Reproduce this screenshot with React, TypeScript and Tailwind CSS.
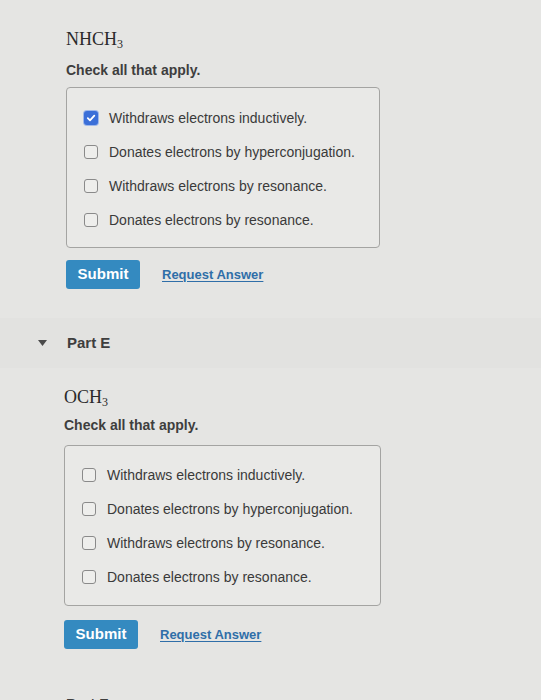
import React from "react";

const options = [
  "Withdraws electrons inductively.",
  "Donates electrons by hyperconjugation.",
  "Withdraws electrons by resonance.",
  "Donates electrons by resonance.",
];

function Box({ checked }: { checked: boolean }) {
  if (checked) {
    return (
      <span className="flex h-[14px] w-[14px] shrink-0 items-center justify-center rounded-[3px] bg-[#3b6fd8] ring-1 ring-[#9fb8ea]">
        <svg width="10" height="10" viewBox="0 0 10 10">
          <path d="M1.8 5.2 L4 7.4 L8.3 2.6" fill="none" stroke="#fff" strokeWidth="1.8" strokeLinecap="round" strokeLinejoin="round" />
        </svg>
      </span>
    );
  }
  return <span className="h-[14px] w-[14px] shrink-0 rounded-[3px] border border-[#8a8a8a] bg-[#eeeeec]" />;
}

function Question({
  formula,
  sub,
  checkedIndex,
  offset,
  second,
}: {
  formula: string;
  sub: string;
  checkedIndex: number;
  offset: number;
  second?: boolean;
}) {
  return (
    <div style={{ marginLeft: offset }}>
      <div className="text-[18px] leading-[22px] text-[#2a2a2a]" style={{ fontFamily: '"Liberation Serif", serif' }}>
        {formula}
        <sub className="text-[12px]">{sub}</sub>
      </div>
      <div className={(second ? "mt-[8px]" : "mt-[11px]") + " text-[14px] font-bold leading-[18px] text-[#3e3e3e]"}>
        Check all that apply.
      </div>
      <div
        className={
          (second ? "mt-[11px] w-[317px] pb-[11px] pt-[12px]" : "mt-[8px] w-[314px] pb-[10px] pt-[13px]") +
          " rounded-[4px] border border-[#a4a4a2] bg-[#e9e9e7] pl-[17px]"
        }
      >
        {options.map((o, i) => (
          <div key={o} className="flex h-[34px] items-center gap-[11px]">
            <Box checked={i === checkedIndex} />
            <span className="text-[14px] text-[#3a3a3a]">{o}</span>
          </div>
        ))}
      </div>
      <div className={(second ? "mt-[14px]" : "mt-[12px]") + " flex items-center gap-[22px]"}>
        <button className="h-[29px] w-[74px] rounded-[3px] bg-[#348ac0] text-[15px] font-bold text-white">Submit</button>
        <span className="text-[13px] font-bold text-[#2f6ea8] underline underline-offset-2">Request Answer</span>
      </div>
    </div>
  );
}

export default function App() {
  return (
    <div className="h-[700px] w-[541px] overflow-hidden bg-[#e5e5e3]" style={{ fontFamily: '"Liberation Sans", Arial, sans-serif' }}>
      <div className="pt-[28px]">
        <Question formula="NHCH" sub="3" checkedIndex={0} offset={66} />
      </div>
      <div className="mt-[29px] flex h-[50px] items-center bg-[#e2e2e0]">
        <svg className="ml-[38px]" width="9" height="6" viewBox="0 0 9 6">
          <path d="M0 0 L9 0 L4.5 6 Z" fill="#4a4a4a" />
        </svg>
        <span className="ml-[20px] text-[15px] font-semibold text-[#3e3e3e]">Part E</span>
      </div>
      <div className="pt-[18px]">
        <Question formula="OCH" sub="3" checkedIndex={-1} offset={64} second />
      </div>
      <div className="ml-[66px] mt-[46px] text-[15px] font-semibold leading-[18px] text-[#3e3e3e]">Part F</div>
    </div>
  );
}
